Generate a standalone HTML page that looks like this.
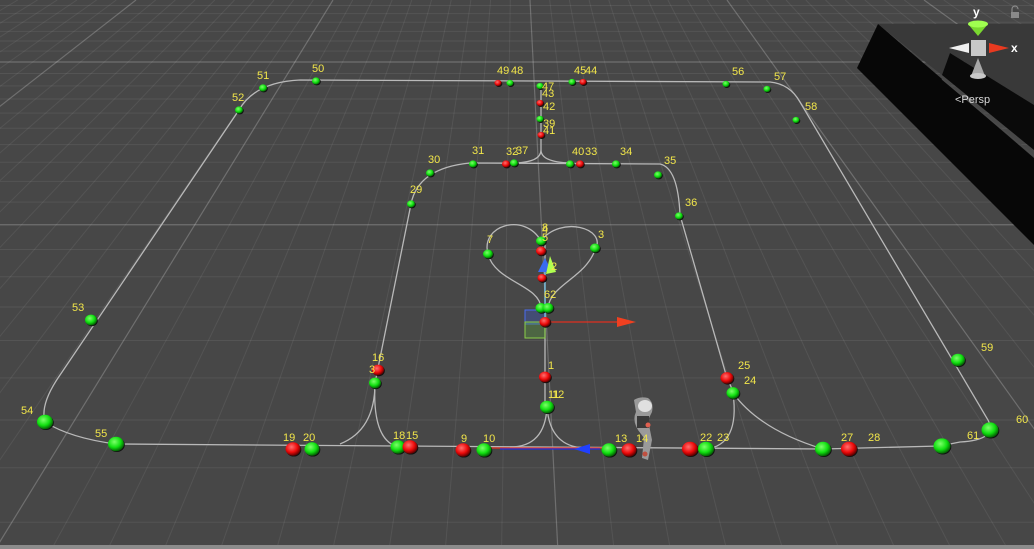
<!DOCTYPE html>
<html><head><meta charset="utf-8"><style>
html,body{margin:0;padding:0;background:#474747;overflow:hidden}
svg{display:block}
text{font-family:"Liberation Sans",sans-serif;font-size:11px;fill:#f2e64a}
</style></head><body>
<svg id="s" width="1034" height="549" viewBox="0 0 1034 549" xmlns="http://www.w3.org/2000/svg">
<defs>
<radialGradient id="g" cx="40%" cy="35%" r="65%"><stop offset="0" stop-color="#7dff6a"/><stop offset="0.6" stop-color="#10e010"/><stop offset="1" stop-color="#056005"/></radialGradient>
<radialGradient id="r" cx="40%" cy="35%" r="65%"><stop offset="0" stop-color="#ff7070"/><stop offset="0.6" stop-color="#ee0a0a"/><stop offset="1" stop-color="#600000"/></radialGradient>
</defs>
<rect width="1034" height="549" fill="#474747"/>
<g id="grid"></g>
<!-- black slabs top right -->
<polygon points="878,24 1034,24 1034,105 950,53 942,75 920,58" fill="#393939"/>
<polygon points="878,24 857,68 1034,245 1034,158" fill="#070707"/>
<polygon points="950,53 942,75 1034,150 1034,105" fill="#0a0a0a"/>
<line x1="942" y1="79" x2="1034" y2="156" stroke="#4a4a4a" stroke-width="1.2"/>
<!-- paths -->
<g fill="none" stroke="#b9b9b9" stroke-width="1.3">
<path d="M45,422 Q40,405 58,378 L239,110 Q255,82 300,80 L770,82 Q790,84 800,102 L988,420 Q998,440 960,442 L940,446 L823,449 L116,444 Q70,438 45,422"/>
<path d="M398,447 Q372,440 375,383 L411,204 Q418,168 470,163 L660,164 Q678,168 680,215 L727,378 Q735,395 733,393"/>
<path d="M733,393 Q740,445 706,449"/>
<path d="M733,393 Q760,430 823,449"/>
<path d="M375,383 Q375,430 340,444"/>
<path d="M541,86 L541,150 Q541,162 515,163 M541,150 Q541,162 570,163"/>
<path d="M541,241 C525,212 480,225 488,254 C495,282 540,285 541,308"/>
<path d="M541,241 C560,215 608,228 595,250 C585,278 550,285 548,308"/>
<path d="M545,241 L545,407 M547,407 Q545,447 510,447 M547,407 Q550,447 585,448"/>
</g>
<!-- gizmo at center -->
<rect x="525" y="310" width="20" height="14" fill="rgba(60,90,200,0.35)" stroke="#4a6cf0"/>
<rect x="525" y="322" width="20" height="16" fill="rgba(90,160,60,0.35)" stroke="#8bd04a"/>
<line x1="545" y1="322" x2="620" y2="322" stroke="#e03020" stroke-width="1.3"/>
<polygon points="617,317 636,322 617,327" fill="#f04020"/>
<line x1="545" y1="260" x2="545" y2="322" stroke="#6bd0ff" stroke-width="1"/>
<polygon points="538,272 545,258 552,272" fill="#3a6cf0"/>
<polygon points="546,274 550,256 556,272" fill="#b0ff50"/>
<line x1="484" y1="448" x2="610" y2="448" stroke="#e03020" stroke-width="1.3"/>
<line x1="500" y1="449" x2="600" y2="449" stroke="#2030e0" stroke-width="1.3"/>
<polygon points="590,444 574,449 590,454" fill="#2040ff"/>
<!-- character -->
<g>
<path d="M634,400 Q640,396 648,398 Q654,402 652,412 L648,420 L652,440 L648,460 L642,458 L644,438 L638,430 Q632,420 636,412 Z" fill="#9a9a9a"/>
<ellipse cx="645" cy="406" rx="7" ry="6" fill="#e0e0e0"/>
<rect x="637" y="416" width="12" height="12" fill="#3a3a3a"/>
<circle cx="648" cy="425" r="2.5" fill="#e06050"/>
<circle cx="645" cy="454" r="2.5" fill="#c05040"/>
</g>
<!-- dots -->
<g id="dots"></g>
<!-- axis gizmo -->
<text x="973" y="16" style="fill:#fff;font-weight:bold;font-size:12px">y</text>
<polygon points="968,24 988,24 978,36" fill="#7ad830"/>
<ellipse cx="978" cy="24" rx="10" ry="3.5" fill="#a0ff50"/>
<polygon points="949,48 969,43 969,53" fill="#f0f0f0"/>
<polygon points="1009,48 989,43 989,53" fill="#e83a20"/>
<text x="1011" y="52" style="fill:#fff;font-weight:bold;font-size:12px">x</text>
<polygon points="978,58 971,76 985,76" fill="#a8a8a8"/>
<ellipse cx="978" cy="76" rx="8" ry="3" fill="#c8c8c8"/>
<rect x="971" y="40" width="15" height="16" fill="#c8c8c8"/>
<rect x="1011" y="12" width="8" height="6" fill="#8a8a8a"/>
<path d="M1012,12 v-3 a3,3 0 0 1 6,0" fill="none" stroke="#8a8a8a" stroke-width="1.2"/>
<text x="955" y="103" style="fill:#d8d8d8;font-size:11px">&lt;Persp</text>
<rect x="0" y="545" width="1034" height="4" fill="#8c8c8c"/>
</svg>
<script>
(function(){
var ns="http://www.w3.org/2000/svg",G=document.getElementById("grid");
function ln(x1,y1,x2,y2,c,w){var l=document.createElementNS(ns,"line");l.setAttribute("x1",x1);l.setAttribute("y1",y1);l.setAttribute("x2",x2);l.setAttribute("y2",y2);l.setAttribute("stroke",c);l.setAttribute("stroke-width",w);G.appendChild(l);}
var vx=515,vy=-296;
for(var k=-40;k<=50;k++){var x0=136+19.7*k;var maj=(k%10===0);
var x1=vx+(x0-vx)*(845/296);
ln(x0,0,x1,549,maj?"rgba(255,255,255,0.22)":"rgba(255,255,255,0.07)",maj?1.2:1);}
for(var z=12;z<=39;z++){var y=-296+11456/z;if(y<0||y>549)continue;var maj=((z-2)%10===0);
ln(0,y,1034,y,maj?"rgba(255,255,255,0.22)":"rgba(255,255,255,0.07)",maj?1.2:1);}
var D=document.getElementById("dots");
var pts=[
[316,81,"g",4,"50",312,72],[263,88,"g",4,"51",257,79],[239,110,"g",4,"52",232,101],
[498,83,"r",3.5,"49",497,74],[510,83,"g",3.5,"48",511,74],
[540,86,"g",3.5,"47",542,90],[540,103,"r",3.5,"42",543,110],[540,119,"g",3.5,"39",543,127],[541,135,"r",3.5,"41",543,134],
[572,82,"g",3.5,"45",574,74],[583,82,"r",3.5,"44",585,74],
[726,84,"g",3.5,"56",732,75],[767,89,"g",3.5,"57",774,80],[796,120,"g",3.5,"58",805,110],
[473,164,"g",4,"31",472,154],[506,164,"r",4,"32",506,155],[514,163,"g",4,"37",516,154],
[570,164,"g",4,"40",572,155],[580,164,"r",4,"33",585,155],[616,164,"g",4,"34",620,155],
[658,175,"g",4,"35",664,164],[430,173,"g",4,"30",428,163],[411,204,"g",4,"29",410,193],[679,216,"g",4,"36",685,206],
[488,254,"g",5,"7",487,243],[595,248,"g",5,"3",598,238],[541,241,"g",5,"4",542,233],[541,251,"r",5,"",0,0],
[542,278,"r",4.5,"",0,0],[541,308,"g",5.5,"62",544,298],[548,308,"g",5.5,"",0,0],[545,322,"r",5.5,"",0,0],
[91,320,"g",6,"53",72,311],[378,370,"r",6,"16",372,361],[375,383,"g",6,"",0,0],[545,377,"r",6,"1",548,369],
[547,407,"g",7,"11",548,398],[727,378,"r",6.5,"25",738,369],[733,393,"g",6.5,"24",744,384],
[958,360,"g",7,"59",981,351],[45,422,"g",8,"54",21,414],[116,444,"g",8,"55",95,437],
[293,449,"r",7.5,"19",283,441],[312,449,"g",7.5,"20",303,441],[398,447,"g",7.5,"18",393,439],[410,447,"r",7.5,"15",406,439],
[463,450,"r",7.5,"9",461,442],[484,450,"g",7.5,"10",483,442],[609,450,"g",7.5,"13",615,442],[629,450,"r",7.5,"14",636,442],
[690,449,"r",8,"22",700,441],[706,449,"g",8,"23",717,441],[823,449,"g",8,"",0,0],[849,449,"r",8,"27",841,441],[0,0,"x",0,"28",868,441],
[942,446,"g",8.5,"61",967,439],[990,430,"g",8.5,"60",1016,423]];
pts.forEach(function(p){
if(p[2]!=="x"){var e=document.createElementNS(ns,"ellipse");e.setAttribute("cx",p[0]+0.8);e.setAttribute("cy",p[1]+0.8);e.setAttribute("rx",p[3]);e.setAttribute("ry",p[3]*0.9);e.setAttribute("fill","#111");D.appendChild(e);
var c=document.createElementNS(ns,"ellipse");c.setAttribute("cx",p[0]);c.setAttribute("cy",p[1]);c.setAttribute("rx",p[3]);c.setAttribute("ry",p[3]*0.9);c.setAttribute("fill","url(#"+p[2]+")");D.appendChild(c);}
if(p[4]){var t=document.createElementNS(ns,"text");t.setAttribute("x",p[5]);t.setAttribute("y",p[6]);t.textContent=p[4];D.appendChild(t);}
});
var extra=[["43",542,97],["5",542,241],["2",551,270],["3",369,373],["12",552,398],["8",542,231]];
extra.forEach(function(p){var t=document.createElementNS(ns,"text");t.setAttribute("x",p[1]);t.setAttribute("y",p[2]);t.textContent=p[0];D.appendChild(t);});
})();
</script>
</body></html>
